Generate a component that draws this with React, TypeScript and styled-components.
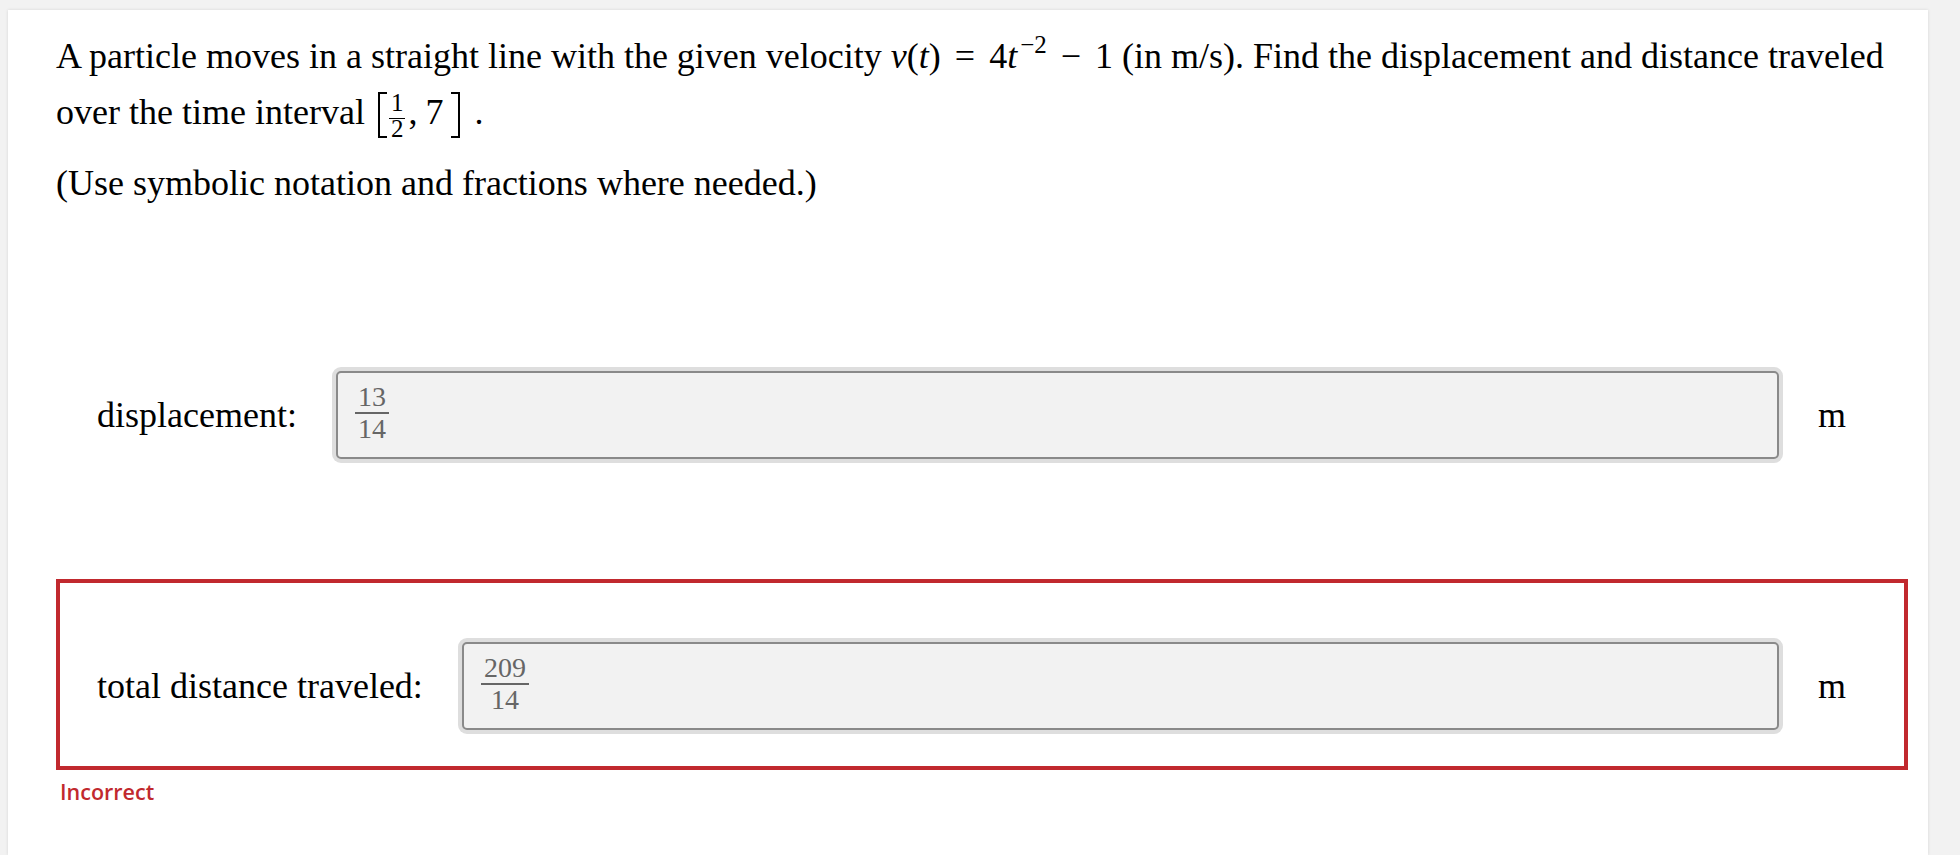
import React from 'react';
import styled, { createGlobalStyle } from 'styled-components';

const GlobalStyle = createGlobalStyle`
	html, body {
		margin: 0;
		padding: 0;
		background: #f2f2f2;
	}
`;

type Answer = {
	label: string;
	num: string;
	den: string;
	unit: string;
	isWrong: boolean;
};

const answers: Answer[] = [
	{ label: 'displacement:', num: '13', den: '14', unit: 'm', isWrong: false },
	{ label: 'total distance traveled:', num: '209', den: '14', unit: 'm', isWrong: true },
];

const App = () => {
	return (
		<Page>
			<GlobalStyle />
			<Card>
				{/* 문제 */}
				<Question>
					A particle moves in a straight line with the given velocity <Var>v</Var>(<Var>t</Var>)
					<Op>=</Op>4<Var>t</Var>
					<Sup>−2</Sup>
					<Op>−</Op>1 (in m/s). Find the displacement and distance traveled over the time interval{' '}
					<LBracket />
					<InlineFrac>
						<InlineNum>1</InlineNum>
						<InlineDen>2</InlineDen>
					</InlineFrac>
					<Comma>,</Comma>7<RBracket />
					<Period>.</Period>
				</Question>
				<Hint>(Use symbolic notation and fractions where needed.)</Hint>

				{/* 답안 */}
				{answers.map((obj, index) => (
					<Block key={`answer-${index}`} $first={index === 0}>
						<Row $wrong={obj.isWrong}>
							<Label>{obj.label}</Label>
							<AnswerBox>
								<Frac>
									<Num>{obj.num}</Num>
									<Den>{obj.den}</Den>
								</Frac>
							</AnswerBox>
							<Unit>{obj.unit}</Unit>
						</Row>
						{obj.isWrong && <Feedback>Incorrect</Feedback>}
					</Block>
				))}
			</Card>
		</Page>
	);
};

const Page = styled.div`
	padding: 10px 32px 0 8px;
	min-height: 100vh;
	box-sizing: border-box;
`;

const Card = styled.div`
	background: #fff;
	box-shadow: 0 0 3px rgba(0, 0, 0, 0.12);
	min-height: calc(100vh - 10px);
	box-sizing: border-box;
	padding: 18px 20px 0 48px;
	font-family: 'Liberation Serif', 'Times New Roman', serif;
	font-size: 36px;
	color: #000;
`;

const Question = styled.p`
	margin: 0;
	line-height: 56px;
`;

const Hint = styled.p`
	margin: 15px 0 0;
	line-height: 56px;
`;

const Var = styled.i`
	font-style: italic;
`;

const Op = styled.span`
	margin: 0 14px;
`;

const Sup = styled.span`
	font-size: 25px;
	vertical-align: 15px;
	line-height: 0;
	margin-left: 3px;
`;

const LBracket = styled.span`
	display: inline-block;
	width: 9px;
	height: 46px;
	border: 2px solid #000;
	border-right: none;
	box-sizing: border-box;
	vertical-align: -14px;
	margin: 0 2px 0 4px;
`;

const RBracket = styled(LBracket)`
	border-left: none;
	border-right: 2px solid #000;
	margin: 0 0 0 8px;
`;

const InlineFrac = styled.span`
	display: inline-flex;
	flex-direction: column;
	align-items: center;
	font-size: 25px;
	vertical-align: 13px;
`;

const InlineNum = styled.span`
	line-height: 18px;
	border-bottom: 1.5px solid #000;
	padding: 0 2px 6px;
`;

const InlineDen = styled.span`
	line-height: 18px;
	padding-top: 1px;
`;

const Comma = styled.span`
	margin: 0 8px 0 3px;
`;

const Period = styled.span`
	margin-left: 14px;
`;

const Block = styled.div<{ $first: boolean }>`
	margin-top: ${({ $first }) => ($first ? '97px' : '80px')};
`;

const Row = styled.div<{ $wrong: boolean }>`
	display: flex;
	align-items: center;
	gap: 35px;
	border: 4px solid ${({ $wrong }) => ($wrong ? '#c1292e' : 'transparent')};
	padding: 55px 58px 32px 37px;
`;

const Label = styled.span`
	white-space: nowrap;
`;

const AnswerBox = styled.div`
	flex: 1;
	height: 88px;
	margin: 4px;
	box-sizing: border-box;
	border: 2px solid #8a8a8a;
	border-radius: 5px;
	box-shadow: 0 0 0 4px #dedede;
	background: #f2f2f2;
	display: flex;
	align-items: center;
	padding-left: 17px;
`;

const Frac = styled.div`
	display: inline-flex;
	flex-direction: column;
	align-items: center;
	font-size: 28px;
	line-height: 26px;
	color: #666;
	margin-top: -4px;
`;

const Num = styled.span`
	border-bottom: 2px solid #666;
	padding: 0 3px 2px;
`;

const Den = styled.span`
	padding-top: 2px;
`;

const Unit = styled.span``;

const Feedback = styled.div`
	font-family: 'Open Sans', 'Liberation Sans', sans-serif;
	font-weight: 600;
	font-size: 21.5px;
	color: #c1292e;
	padding: 7px 0 0 4px;
`;

export default App;
